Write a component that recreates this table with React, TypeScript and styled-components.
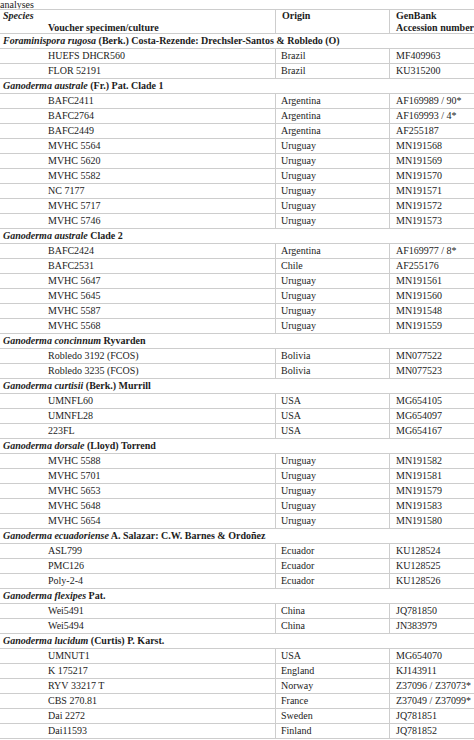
import React from "react";
import styled, { createGlobalStyle } from "styled-components";

const GlobalStyle = createGlobalStyle`
  html, body { margin: 0; padding: 0; background: #ffffff; }
  body {
    font-family: "Liberation Serif", "Times New Roman", serif;
    font-size: 10px;
    color: #1c1c1c;
    overflow: hidden;
  }
`;

const LINE = "#cdcdcd";

const Page = styled.div`
  width: 474px;
  display: flex;
  flex-direction: column;
`;

const Caption = styled.div`
  height: 9px;
  line-height: 9px;
  white-space: nowrap;
`;

const Table = styled.div`
  display: flex;
  flex-direction: column;
`;

const HeaderRow = styled.div`
  display: grid;
  grid-template-columns: 275px 114px 1fr;
  box-sizing: border-box;
  height: 25px;
  border-top: 1px solid ${LINE};
  border-bottom: 1px solid ${LINE};
`;

const HeaderCell = styled.div<{ $divider?: boolean }>`
  display: flex;
  flex-direction: column;
  font-weight: bold;
  line-height: 11.5px;
  padding-left: ${(p) => (p.$divider ? "6px" : "0")};
  border-left: ${(p) => (p.$divider ? `1px solid ${LINE}` : "none")};
  white-space: nowrap;
`;

const HeadLine = styled.span<{ $indent?: number; $italic?: boolean }>`
  display: block;
  padding-left: ${(p) => p.$indent ?? 0}px;
  font-style: ${(p) => (p.$italic ? "italic" : "normal")};
`;

const DataRow = styled.div`
  display: grid;
  grid-template-columns: 275px 114px 1fr;
  box-sizing: border-box;
  height: 15px;
  border-bottom: 1px solid ${LINE};
`;

const GroupRow = styled.div`
  box-sizing: border-box;
  height: 15px;
  border-bottom: 1px solid ${LINE};
  padding-left: 3px;
  line-height: 14px;
  font-weight: bold;
  white-space: nowrap;
`;

const Taxon = styled.span`
  font-style: italic;
`;

const Cell = styled.div<{ $indent?: number; $divider?: boolean }>`
  line-height: 14px;
  white-space: nowrap;
  padding-left: ${(p) => p.$indent ?? 0}px;
  border-left: ${(p) => (p.$divider ? `1px solid ${LINE}` : "none")};
`;

type Group = { name: string; auth: string; rows: [string, string, string][] };

const groups: Group[] = [
  {
    name: "Foraminispora rugosa",
    auth: "(Berk.) Costa-Rezende: Drechsler-Santos & Robledo (O)",
    rows: [
      ["HUEFS DHCR560", "Brazil", "MF409963"],
      ["FLOR 52191", "Brazil", "KU315200"],
    ],
  },
  {
    name: "Ganoderma australe",
    auth: "(Fr.) Pat. Clade 1",
    rows: [
      ["BAFC2411", "Argentina", "AF169989 / 90*"],
      ["BAFC2764", "Argentina", "AF169993 / 4*"],
      ["BAFC2449", "Argentina", "AF255187"],
      ["MVHC 5564", "Uruguay", "MN191568"],
      ["MVHC 5620", "Uruguay", "MN191569"],
      ["MVHC 5582", "Uruguay", "MN191570"],
      ["NC 7177", "Uruguay", "MN191571"],
      ["MVHC 5717", "Uruguay", "MN191572"],
      ["MVHC 5746", "Uruguay", "MN191573"],
    ],
  },
  {
    name: "Ganoderma australe",
    auth: "Clade 2",
    rows: [
      ["BAFC2424", "Argentina", "AF169977 / 8*"],
      ["BAFC2531", "Chile", "AF255176"],
      ["MVHC 5647", "Uruguay", "MN191561"],
      ["MVHC 5645", "Uruguay", "MN191560"],
      ["MVHC 5587", "Uruguay", "MN191548"],
      ["MVHC 5568", "Uruguay", "MN191559"],
    ],
  },
  {
    name: "Ganoderma concinnum",
    auth: "Ryvarden",
    rows: [
      ["Robledo 3192 (FCOS)", "Bolivia", "MN077522"],
      ["Robledo 3235 (FCOS)", "Bolivia", "MN077523"],
    ],
  },
  {
    name: "Ganoderma curtisii",
    auth: "(Berk.) Murrill",
    rows: [
      ["UMNFL60", "USA", "MG654105"],
      ["UMNFL28", "USA", "MG654097"],
      ["223FL", "USA", "MG654167"],
    ],
  },
  {
    name: "Ganoderma dorsale",
    auth: "(Lloyd) Torrend",
    rows: [
      ["MVHC 5588", "Uruguay", "MN191582"],
      ["MVHC 5701", "Uruguay", "MN191581"],
      ["MVHC 5653", "Uruguay", "MN191579"],
      ["MVHC 5648", "Uruguay", "MN191583"],
      ["MVHC 5654", "Uruguay", "MN191580"],
    ],
  },
  {
    name: "Ganoderma ecuadoriense",
    auth: "A. Salazar: C.W. Barnes & Ordoñez",
    rows: [
      ["ASL799", "Ecuador", "KU128524"],
      ["PMC126", "Ecuador", "KU128525"],
      ["Poly-2-4", "Ecuador", "KU128526"],
    ],
  },
  {
    name: "Ganoderma flexipes",
    auth: "Pat.",
    rows: [
      ["Wei5491", "China", "JQ781850"],
      ["Wei5494", "China", "JN383979"],
    ],
  },
  {
    name: "Ganoderma lucidum",
    auth: "(Curtis) P. Karst.",
    rows: [
      ["UMNUT1", "USA", "MG654070"],
      ["K 175217", "England", "KJ143911"],
      ["RYV 33217 T", "Norway", "Z37096 / Z37073*"],
      ["CBS 270.81", "France", "Z37049 / Z37099*"],
      ["Dai 2272", "Sweden", "JQ781851"],
      ["Dai11593", "Finland", "JQ781852"],
    ],
  },
];

export default function App() {
  return (
    <Page>
      <GlobalStyle />
      <Caption>analyses</Caption>
      <Table>
        <HeaderRow>
          <HeaderCell>
            <HeadLine $indent={3} $italic>
              Species
            </HeadLine>
            <HeadLine $indent={48}>Voucher specimen/culture</HeadLine>
          </HeaderCell>
          <HeaderCell $divider>
            <HeadLine>Origin</HeadLine>
          </HeaderCell>
          <HeaderCell $divider>
            <HeadLine>GenBank</HeadLine>
            <HeadLine>Accession number</HeadLine>
          </HeaderCell>
        </HeaderRow>
        {groups.map((g, gi) => (
          <React.Fragment key={gi}>
            <GroupRow>
              <Taxon>{g.name}</Taxon> {g.auth}
            </GroupRow>
            {g.rows.map((r, ri) => (
              <DataRow key={ri}>
                <Cell $indent={48}>{r[0]}</Cell>
                <Cell $divider $indent={5}>
                  {r[1]}
                </Cell>
                <Cell $divider $indent={6}>
                  {r[2]}
                </Cell>
              </DataRow>
            ))}
          </React.Fragment>
        ))}
      </Table>
    </Page>
  );
}
